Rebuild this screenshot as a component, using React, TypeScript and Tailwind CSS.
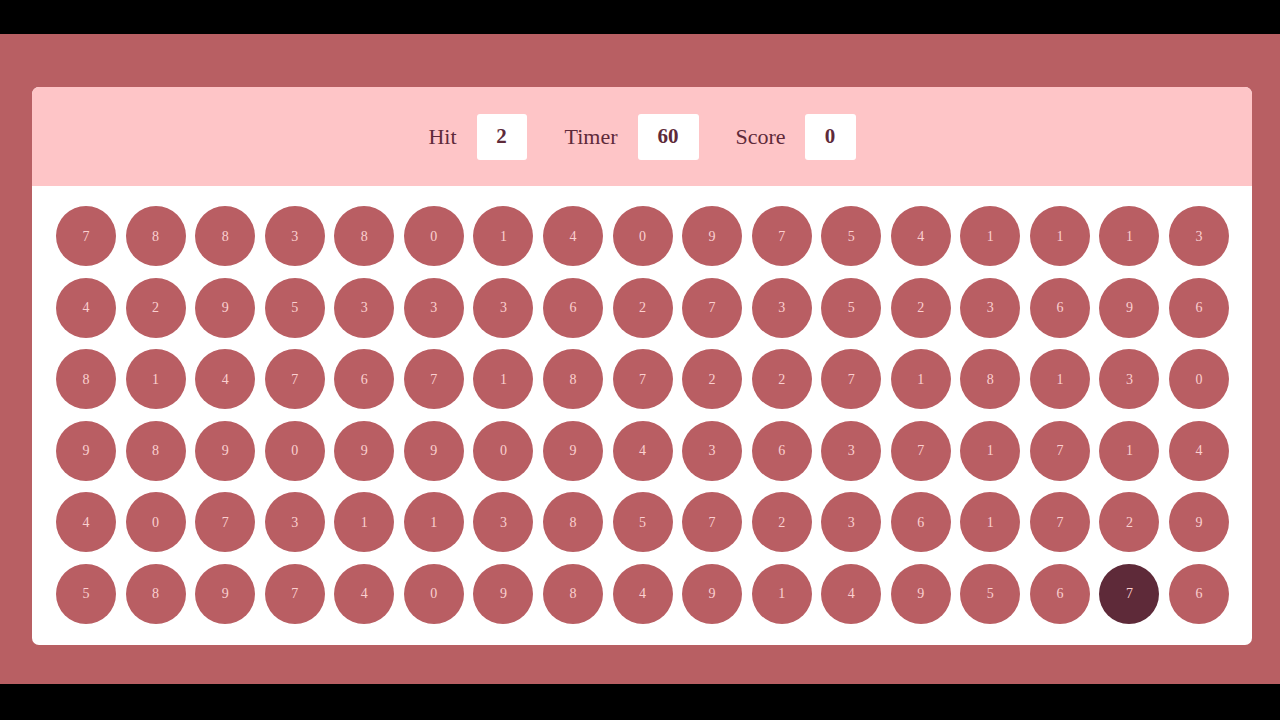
import React from "react";

const rows = [
  "78838014097541113",
  "42953336273523696",
  "81476718722718130",
  "98909909436371714",
  "40731138572361729",
  "58974098491495676",
];

export default function App() {
  return (
    <div className="w-[1280px] h-[720px] bg-black flex flex-col" style={{ fontFamily: '"Liberation Serif", "Times New Roman", serif' }}>
      <div className="h-[34px] shrink-0" />
      <div className="h-[650px] bg-[#b85f63] pt-[53px] pl-[32px] pr-[28px]">
        <div className="w-[1220px] h-[558px] bg-white rounded-[7px] overflow-hidden flex flex-col">
          <div className="h-[99px] bg-[#fec5c7] flex items-center justify-center text-[#5e2a3a]">
            <span className="text-[22px] mr-[20px]">Hit</span>
            <div className="w-[50px] h-[46px] bg-white rounded-[3px] flex items-center justify-center text-[21px] font-bold mr-[38px]">2</div>
            <span className="text-[22px] mr-[20px]">Timer</span>
            <div className="w-[61px] h-[46px] bg-white rounded-[3px] flex items-center justify-center text-[21px] font-bold mr-[37px]">60</div>
            <span className="text-[22px] mr-[19px]">Score</span>
            <div className="w-[51px] h-[46px] bg-white rounded-[3px] flex items-center justify-center text-[21px] font-bold">0</div>
          </div>
          <div className="flex flex-col gap-y-[11.6px] pt-[20px] pl-[24px] pr-[23px]">
            {rows.map((r, ri) => (
              <div key={ri} className="flex justify-between">
                {r.split("").map((d, ci) => {
                  const dark = ri === 5 && ci === 15;
                  return (
                    <div
                      key={ci}
                      className={
                        dark
                          ? "w-[60px] h-[60px] rounded-full bg-[#5e2a39] flex items-center justify-center text-[14px] text-[#fbd0d0]"
                          : "w-[60px] h-[60px] rounded-full bg-[#b95e63] flex items-center justify-center text-[14px] text-[#fbd0d0]"
                      }
                    >
                      {d}
                    </div>
                  );
                })}
              </div>
            ))}
          </div>
        </div>
      </div>
      <div className="flex-1" />
    </div>
  );
}
